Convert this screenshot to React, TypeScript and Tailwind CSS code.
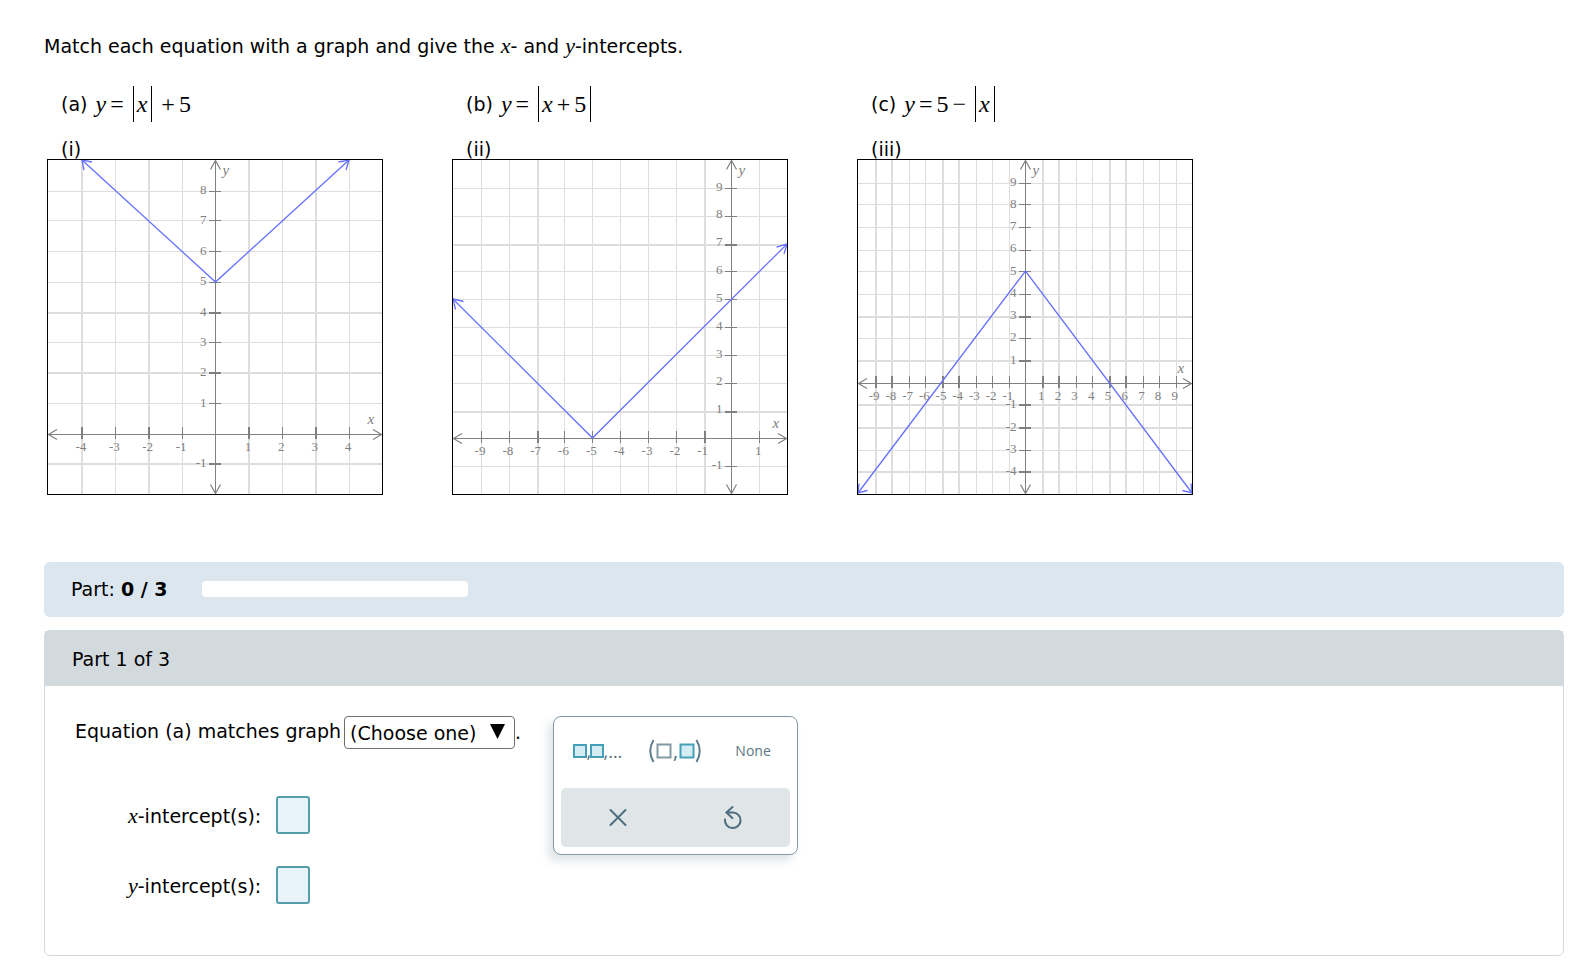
import type { ReactNode } from "react";

type Point = [number, number];

interface GraphSpec {
  title: string;
  /* Grid line centres; whole numbers are drawn 2px wide, half numbers 1px wide. */
  columns: number[];
  rows: number[];
  axisX: number;
  axisY: number;
  stepX: number;
  stepY: number;
  labelsX: number[];
  labelsY: number[];
  curve: Point[];
  heads: Point[][];
}

const graphs: Record<"i" | "ii" | "iii", GraphSpec> = {
  i: {
    title: "Graph (i)",
    columns: [35, 68.5, 102, 135.5, 202, 235.5, 269, 302.5],
    rows: [32.5, 61.5, 92.5, 123.5, 154, 183.5, 214, 244.5, 305],
    axisX: 168.5,
    axisY: 275.5,
    stepX: 33.4,
    stepY: 30.36,
    labelsX: [-4, -3, -2, -1, 1, 2, 3, 4],
    labelsY: [8, 7, 6, 5, 4, 3, 2, 1, -1],
    curve: [[35, 1], [168.5, 123], [302, 1]],
    heads: [
      [[45, 3], [35, 1], [37, 11]],
      [[291.5, 3], [302, 1], [299, 11]],
    ],
  },
  ii: {
    title: "Graph (ii)",
    columns: [29.5, 57.5, 86, 112.5, 140.5, 168.5, 196.5, 224.5, 253, 307.5],
    rows: [29.5, 57.5, 86, 112.5, 140.5, 168.5, 196.5, 224.5, 253, 307.5],
    axisX: 279.5,
    axisY: 279.5,
    stepX: 27.83,
    stepY: 27.83,
    labelsX: [-9, -8, -7, -6, -5, -4, -3, -2, -1, 1],
    labelsY: [9, 8, 7, 6, 5, 4, 3, 2, 1, -1],
    curve: [[1, 140], [140.5, 279], [335, 85]],
    heads: [
      [[11.5, 142.5], [1, 140], [3.5, 150.5]],
      [[324.5, 88], [335, 85], [332, 95]],
    ],
  },
  iii: {
    title: "Graph (iii)",
    columns: [19, 35, 52.5, 68.5, 86, 102, 119.5, 135.5, 152.5, 186, 202, 219.5, 235.5, 253, 269, 286.5, 302.5, 319.5],
    rows: [24.5, 45.5, 68.5, 91.5, 112.5, 135.5, 158, 179.5, 202, 246, 269, 291.5, 313],
    axisX: 168.5,
    axisY: 224.5,
    stepX: 16.7,
    stepY: 22.27,
    labelsX: [-9, -8, -7, -6, -5, -4, -3, -2, -1, 1, 2, 3, 4, 5, 6, 7, 8, 9],
    labelsY: [9, 8, 7, 6, 5, 4, 3, 2, 1, -1, -2, -3, -4],
    curve: [[1, 334], [168.5, 112], [335, 334]],
    heads: [
      [[2, 324.5], [1, 334], [10.5, 331.5]],
      [[334, 324.5], [335, 334], [325.5, 331.5]],
    ],
  },
};

const lineWidth = (p: number) => (Number.isInteger(p) ? 2 : 1);
const toPoints = (pts: Point[]) => pts.map((p) => p.join(",")).join(" ");

function Graph({ spec }: { spec: GraphSpec }) {
  const { axisX: ax, axisY: ay } = spec;
  return (
    <svg role="img" aria-label={spec.title} width="336" height="336" viewBox="0 0 336 336" className="bg-white">
      <g stroke="#dedede">
        {spec.columns.map((x) => (
          <line key={`c${x}`} x1={x} x2={x} y1="1" y2="335" strokeWidth={lineWidth(x)} />
        ))}
        {spec.rows.map((y) => (
          <line key={`r${y}`} x1="1" x2="335" y1={y} y2={y} strokeWidth={lineWidth(y)} />
        ))}
      </g>
      <g stroke="#808080" fill="none">
        <line x1={ax} x2={ax} y1="1" y2="335" />
        <line x1="1" x2="335" y1={ay} y2={ay} />
        {spec.columns.map((x) => (
          <line key={`tc${x}`} x1={x} x2={x} y1={ay - 7.5} y2={ay + 4.5} strokeWidth={lineWidth(x)} />
        ))}
        {spec.rows.map((y) => (
          <line key={`tr${y}`} x1={ax - 6.5} x2={ax + 5.5} y1={y} y2={y} strokeWidth={lineWidth(y)} />
        ))}
        <g strokeWidth="1.2">
          <polyline points={`${ax - 5},10.5 ${ax},1.5 ${ax + 5},10.5`} />
          <polyline points={`${ax - 5},325.5 ${ax},334.5 ${ax + 5},325.5`} />
          <polyline points={`10,${ay - 5} 1.5,${ay} 10,${ay + 5}`} />
          <polyline points={`326,${ay - 5} 334.5,${ay} 326,${ay + 5}`} />
        </g>
      </g>
      <g fill="#808080" fontFamily="'Liberation Serif', serif" fontSize="13">
        {spec.labelsX.map((n) => (
          <text key={`lx${n}`} x={ax + n * spec.stepX - 1} y={ay + 16.5} textAnchor="middle">
            {n}
          </text>
        ))}
        {spec.labelsY.map((n) => (
          <text key={`ly${n}`} x={ax - 9} y={ay - n * spec.stepY + 2.5} textAnchor="end">
            {n}
          </text>
        ))}
        <g fontSize="15" fontStyle="italic">
          <text x="320.5" y={ay - 10.5}>x</text>
          <text x={ax + 7} y="15.5">y</text>
        </g>
      </g>
      <g stroke="#6570ff" strokeWidth="1.3" fill="none">
        <polyline points={toPoints(spec.curve)} />
        {spec.heads.map((h, i) => (
          <polyline key={i} points={toPoints(h)} />
        ))}
      </g>
      <rect x="0.5" y="0.5" width="335" height="335" fill="none" stroke="#000" />
    </svg>
  );
}

function Var({ children }: { children: ReactNode }) {
  return <i className="font-['Liberation_Serif',serif] text-[22px]">{children}</i>;
}

function Abs({ children }: { children: ReactNode }) {
  return <span className="flex items-baseline self-stretch border-x border-black pr-1 pl-[3px]">{children}</span>;
}

function Choice({ tag, equation, label, graph }: { tag: string; equation: ReactNode; label: string; graph: GraphSpec }) {
  return (
    <div className="flex w-[405px] flex-col">
      <div className="flex h-9 items-baseline pl-[17px] leading-9">
        <span className="mr-2">{tag}</span>
        <span className="flex items-baseline self-stretch font-['Liberation_Serif',serif] text-[24px]">{equation}</span>
      </div>
      <div className="mt-[15px] h-[22px] pl-[17px] leading-6">{label}</div>
      <div className="flex pl-[3px]">
        <Graph spec={graph} />
      </div>
    </div>
  );
}

function Intercept({ name, id }: { name: string; id: string }) {
  return (
    <div className="flex h-[38px] items-center gap-3">
      <label htmlFor={id} className="w-[136px] whitespace-nowrap">
        <Var>{name}</Var>-intercept(s):
      </label>
      <input
        id={id}
        type="text"
        className="h-[38px] w-[34px] rounded-[3px] border-2 border-[#569dab] bg-[#e9f4fa] px-1 text-center outline-none"
      />
    </div>
  );
}

function Square({ x, y, size, gray }: { x: number; y: number; size: number; gray?: boolean }) {
  return (
    <rect
      x={x}
      y={y}
      width={size}
      height={size}
      strokeWidth="2"
      stroke={gray ? "#8399a5" : "#469fb8"}
      fill={gray ? "#fff" : "#d3edf3"}
    />
  );
}

function Palette() {
  return (
    <div className="flex h-[139px] w-[245px] flex-col justify-between rounded-lg border border-[#8299a4] bg-white p-[7px] shadow-[-5px_6px_8px_0_rgba(130,153,164,0.25)]">
      <div className="flex h-[54px] items-center">
        <button type="button" aria-label="List of values" className="flex w-[77px] justify-center pr-[7px]">
          <svg width="52" height="28" viewBox="0 0 52 28" fill="#4f6f80" fontFamily="'Open Sans', sans-serif" fontSize="18">
            <Square x={4} y={8} size={12} />
            <Square x={21} y={8} size={12} />
            <text x="16.5" y="20.5">,</text>
            <text x="33.5" y="20.5">,...</text>
          </svg>
        </button>
        <button type="button" aria-label="Ordered pair" className="flex w-[74px] justify-center">
          <svg width="54" height="28" viewBox="0 0 54 28" fill="#4f6f80" fontFamily="'Open Sans', sans-serif" fontSize="20">
            <path d="M5.5 3Q-1 14 5.5 25" fill="none" stroke="#5f7d8c" strokeWidth="2" />
            <Square x={9.5} y={7.5} size={13} gray />
            <text x="25" y="21">,</text>
            <Square x={32.5} y={7.5} size={13} />
            <path d="M48.5 3Q55 14 48.5 25" fill="none" stroke="#5f7d8c" strokeWidth="2" />
          </svg>
        </button>
        <button type="button" className="flex flex-1 justify-center pl-1 font-['Open_Sans',sans-serif] text-sm text-[#5b7786]">
          None
        </button>
      </div>
      <div className="flex h-[59px] rounded-[5px] bg-[#e0e5e8]">
        <button type="button" aria-label="Clear" className="flex flex-1 items-center justify-center">
          <svg width="20" height="20" viewBox="0 0 20 20" fill="none" stroke="#4b6d7d" strokeWidth="2" strokeLinecap="round">
            <path d="M2.5 2 17.5 17M17.5 2 2.5 17" />
          </svg>
        </button>
        <button type="button" aria-label="Undo" className="flex flex-1 items-center justify-center">
          <svg width="20" height="26" viewBox="0 0 20 26" fill="none" stroke="#4b6d7d" strokeWidth="2" strokeLinecap="round" strokeLinejoin="round">
            <path d="M2 14.5A7.8 7.8 0 1 0 9.8 7.5L3.5 7.5" />
            <path d="M9.5 2 3.5 7.5 9.3 13" />
          </svg>
        </button>
      </div>
    </div>
  );
}

export default function App() {
  return (
    <main className="min-h-screen bg-white pt-8 pr-[22px] pb-5 pl-11 font-['DejaVu_Sans',sans-serif] text-[19px] text-black">
      <p className="leading-7">
        Match each equation with a graph and give the <Var>x</Var>- and <Var>y</Var>-intercepts.
      </p>

      <section className="mt-[26px] flex flex-wrap">
        <Choice
          tag="(a)"
          label="(i)"
          graph={graphs.i}
          equation={
            <>
              <i>y</i>
              <span className="mr-[9px] ml-1">=</span>
              <Abs>
                <i>x</i>
              </Abs>
              <span className="mr-1 ml-[9px]">+</span>
              <span>5</span>
            </>
          }
        />
        <Choice
          tag="(b)"
          label="(ii)"
          graph={graphs.ii}
          equation={
            <>
              <i>y</i>
              <span className="mr-[9px] ml-1">=</span>
              <Abs>
                <i>x</i>
                <span className="mx-1">+</span>
                <span>5</span>
              </Abs>
            </>
          }
        />
        <Choice
          tag="(c)"
          label="(iii)"
          graph={graphs.iii}
          equation={
            <>
              <i>y</i>
              <span className="mx-1">=</span>
              <span>5</span>
              <span className="mr-[9px] ml-1">−</span>
              <Abs>
                <i>x</i>
              </Abs>
            </>
          }
        />
      </section>

      <section className="mt-[67px] flex h-[55px] items-center rounded-md bg-[#dce6ef] pl-[27px]">
        <p className="w-[131px]">
          Part: <b>0 / 3</b>
        </p>
        <div role="progressbar" aria-label="Parts completed" aria-valuenow={0} aria-valuemin={0} aria-valuemax={3} className="mb-0.5 h-4 w-[266px] rounded bg-white" />
      </section>

      <section className="mt-[13px] rounded-md border border-[#d3dadd] bg-white">
        <h2 className="flex h-[55px] items-center bg-[#d3dadd] pt-px pl-[27px]">Part 1 of 3</h2>
        <div className="flex items-start gap-8 pt-[30px] pb-[51px] pl-[30px]">
          <div>
            <div className="flex h-[33px] items-center">
              <label htmlFor="graph-choice" className="mr-[3px] pb-0.5">
                Equation (a) matches graph
              </label>
              <span className="relative flex">
                <select
                  id="graph-choice"
                  className="h-[33px] w-[171px] appearance-none rounded border border-[#6f6f6f] bg-white pt-px pl-[5px] outline-none"
                >
                  <option>(Choose one)</option>
                  <option>(i)</option>
                  <option>(ii)</option>
                  <option>(iii)</option>
                </select>
                <svg width="15" height="15" viewBox="0 0 15 15" className="pointer-events-none absolute top-2 right-2.5">
                  <path d="M0 0H15L7.5 15Z" fill="#000" />
                </svg>
              </span>
              <span>.</span>
            </div>
            <div className="mt-[47px] flex flex-col gap-8 pl-[53px]">
              <Intercept id="x-intercept" name="x" />
              <Intercept id="y-intercept" name="y" />
            </div>
          </div>
          <Palette />
        </div>
      </section>
    </main>
  );
}
